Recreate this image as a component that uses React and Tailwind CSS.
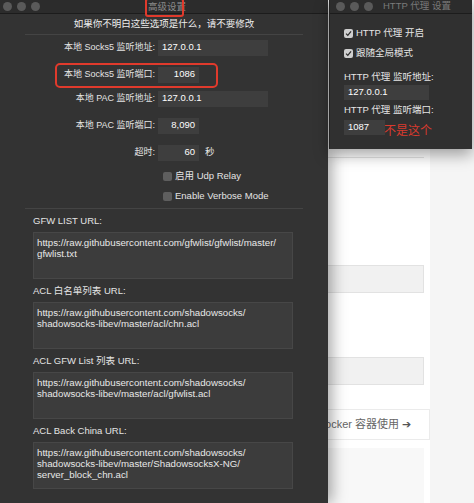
import React from "react"

const FONT = { fontFamily: '"Liberation Sans", "Noto Sans CJK SC", sans-serif' }

// grey traffic lights of an inactive mac window
function Lights({ className }) {
    return (
        <div className={`flex gap-[5px] ${className}`}>
            <span className="w-[9px] h-[9px] rounded-full bg-[#5a5a5a]" />
            <span className="w-[9px] h-[9px] rounded-full bg-[#5a5a5a]" />
            <span className="w-[9px] h-[9px] rounded-full bg-[#5a5a5a]" />
        </div>
    )
}

function Box({ checked }) {
    if (!checked) return <span className="w-[9px] h-[9px] rounded-[2px] bg-[#5e5e5e] shrink-0" />
    return (
        <span className="w-[9px] h-[9px] rounded-[2px] bg-[#cfcfcf] shrink-0 flex items-center justify-center">
            <svg width="7" height="7" viewBox="0 0 8 8">
                <path d="M1.2 4.2 L3.2 6.2 L6.9 1.6" fill="none" stroke="#2b2b2b" strokeWidth="1.4" />
            </svg>
        </span>
    )
}

function Row({ label, value, wide, right, suffix, mt }) {
    return (
        <div className={`flex items-center h-[17px] ${mt}`}>
            <div className="w-[158px] text-right pr-[3px] text-[#e4e4e4] text-[9px]">{label}</div>
            <div
                className={`h-[16px] bg-[#3e3e3e] flex items-center text-white px-[4px] ${wide ? "w-[110px]" : "w-[41px]"} ${right ? "justify-end" : ""}`}
            >
                {value}
            </div>
            {suffix && <span className="ml-[6px] text-[#e4e4e4]">{suffix}</span>}
        </div>
    )
}

function UrlField({ label, lines }) {
    return (
        <div className="flex flex-col">
            <div className="h-[12px] mt-[6px] flex items-center text-[#e4e4e4]">{label}</div>
            <div className="mt-[5px] h-[47px] w-[260px] bg-[#3c3c3c] border border-[#474747] px-[3px] pt-[4px] leading-[11px] text-[#e8e8e8] text-[9.7px]">
                {lines.map((l) => (
                    <div key={l}>{l}</div>
                ))}
            </div>
        </div>
    )
}

export default function App() {
    return (
        <div className="relative w-[474px] h-[503px] overflow-hidden text-[9.5px]" style={FONT}>
            {/* web page behind the windows */}
            <div className="flex h-full">
                <div className="w-[430px] bg-white flex flex-col pl-[240px]">
                    <div className="mt-[157px] h-px w-[184px] bg-[#e4e4e4]" />
                    <div className="mt-[107px] h-[28px] w-[184px] bg-[#f1f1f1] border border-[#e2e2e2]" />
                    <div className="mt-[64px] h-[28px] w-[184px] bg-[#f1f1f1] border border-[#e2e2e2]" />
                    <div className="mt-[24px] h-[31px] w-[190px] bg-white border border-[#ebebeb] flex items-center justify-end pr-[18px] text-[11px] text-[#666]">
                        在 Docker 容器使用 <span className="ml-[3px] text-[#555]">➔</span>
                    </div>
                    <div className="mt-[8px] flex-1 w-[184px] bg-[#f8f8f8]" />
                </div>
                <div className="flex-1 bg-[#f5f5f5]" />
            </div>

            {/* 高级设置 window */}
            <div className="absolute left-0 top-0 w-[328px] h-[503px] bg-[#333333] shadow-[4px_0_14px_rgba(0,0,0,0.35)] flex flex-col">
                <div className="h-[14px] shrink-0 bg-[#2c2c2c] border-b border-[#1c1c1c] flex items-center relative">
                    <Lights className="ml-[3px]" />
                    <div className="absolute left-[148px] top-0 h-[14px] flex items-center text-[#8a8a8a]">高级设置</div>
                </div>
                <div className="h-[20px] flex items-center justify-center text-[#ededed]">如果你不明白这些选项是什么，请不要修改</div>
                <div className="mx-[25px] h-px bg-[#444]" />
                <Row label="本地 Socks5 监听地址:" value="127.0.0.1" wide mt="mt-[4px]" />
                <Row label="本地 Socks5 监听端口:" value="1086" right mt="mt-[10px]" />
                <Row label="本地 PAC 监听地址:" value="127.0.0.1" wide mt="mt-[7px]" />
                <Row label="本地 PAC 监听端口:" value="8,090" right mt="mt-[10px]" />
                <Row label="超时:" value="60" right suffix="秒" mt="mt-[10px]" />
                <div className="mt-[9px] h-[12px] flex items-center gap-[3px] pl-[163px] text-[#e4e4e4]">
                    <Box />
                    启用 Udp Relay
                </div>
                <div className="mt-[8px] h-[12px] flex items-center gap-[3px] pl-[163px] text-[#e4e4e4]">
                    <Box />
                    Enable Verbose Mode
                </div>
                <div className="mt-[6px] mx-[25px] h-px bg-[#444]" />
                <div className="pl-[33px]">
                    <UrlField label="GFW LIST URL:" lines={["https://raw.githubusercontent.com/gfwlist/gfwlist/master/", "gfwlist.txt"]} />
                    <UrlField
                        label="ACL 白名单列表 URL:"
                        lines={["https://raw.githubusercontent.com/shadowsocks/", "shadowsocks-libev/master/acl/chn.acl"]}
                    />
                    <UrlField
                        label="ACL GFW List 列表 URL:"
                        lines={["https://raw.githubusercontent.com/shadowsocks/", "shadowsocks-libev/master/acl/gfwlist.acl"]}
                    />
                    <UrlField
                        label="ACL Back China URL:"
                        lines={[
                            "https://raw.githubusercontent.com/shadowsocks/",
                            "shadowsocks-libev/master/ShadowsocksX-NG/",
                            "server_block_chn.acl",
                        ]}
                    />
                </div>
            </div>

            {/* HTTP 代理 设置 window */}
            <div className="absolute left-[329px] top-0 w-[143px] h-[149px] bg-[#303030] border-l border-[#222] shadow-[0_6px_14px_rgba(0,0,0,0.35)] flex flex-col">
                <div className="h-[14px] shrink-0 bg-[#2c2c2c] border-b border-[#1c1c1c] flex items-center">
                    <Lights className="ml-[6px]" />
                    <span className="ml-[10px] text-[#7a7a7a]">HTTP 代理 设置</span>
                </div>
                <div className="pl-[14px] flex flex-col text-[#e6e6e6]">
                    <div className="mt-[13px] h-[12px] flex items-center gap-[3px]">
                        <Box checked />
                        HTTP 代理 开启
                    </div>
                    <div className="mt-[8px] h-[12px] flex items-center gap-[3px]">
                        <Box checked />
                        跟随全局模式
                    </div>
                    <div className="mt-[12px] h-[12px] flex items-center">HTTP 代理 监听地址:</div>
                    <div className="mt-[2px] h-[15px] w-[85px] bg-[#3e3e3e] flex items-center px-[4px] text-white">127.0.0.1</div>
                    <div className="mt-[4px] h-[12px] flex items-center">HTTP 代理 监听端口:</div>
                    <div className="mt-[4px] flex items-center">
                        <div className="h-[15px] w-[41px] bg-[#3e3e3e] flex items-center px-[4px] text-white">1087</div>
                    </div>
                </div>
            </div>

            {/* annotations */}
            <div className="absolute left-[145px] top-[-2px] w-[39px] h-[19px] border-2 border-[#e03a2c] rounded-[3px]" />
            <div className="absolute left-[55px] top-[63px] w-[163px] h-[25px] border-2 border-[#e03a2c] rounded-[5px]" />
            <div className="absolute left-[384px] top-[123px] text-[12px] leading-[16px] text-[#d93a2e]">不是这个</div>
        </div>
    )
}
